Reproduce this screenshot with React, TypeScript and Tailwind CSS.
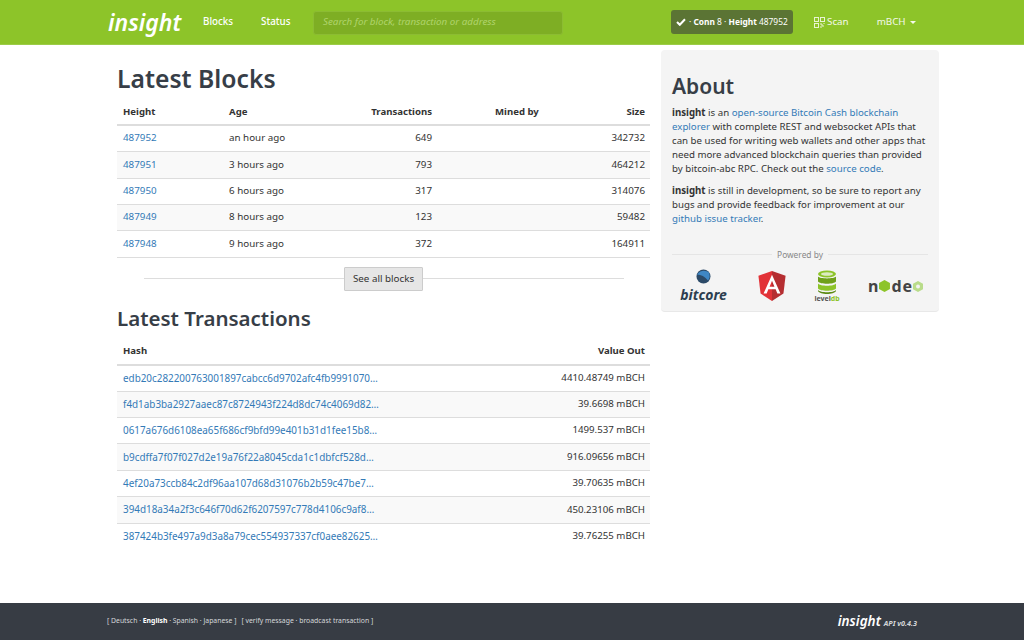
const blocks = [
  ['487952', 'an hour ago', '649', '342732'],
  ['487951', '3 hours ago', '793', '464212'],
  ['487950', '6 hours ago', '317', '314076'],
  ['487949', '8 hours ago', '123', '59482'],
  ['487948', '9 hours ago', '372', '164911'],
]

const txs = [
  ['edb20c282200763001897cabcc6d9702afc4fb9991070…', '4410.48749 mBCH'],
  ['f4d1ab3ba2927aaec87c8724943f224d8dc74c4069d82…', '39.6698 mBCH'],
  ['0617a676d6108ea65f686cf9bfd99e401b31d1fee15b8…', '1499.537 mBCH'],
  ['b9cdffa7f07f027d2e19a76f22a8045cda1c1dbfcf528d…', '916.09656 mBCH'],
  ['4ef20a73ccb84c2df96aa107d68d31076b2b59c47be7…', '39.70635 mBCH'],
  ['394d18a34a2f3c646f70d62f6207597c778d4106c9af8…', '450.23106 mBCH'],
  ['387424b3fe497a9d3a8a79cec554937337cf0aee82625…', '39.76255 mBCH'],
]

function QrIcon() {
  return (
    <svg width="11" height="11" viewBox="0 0 11 11" fill="none" stroke="#e8f3d2" strokeWidth="1">
      <rect x="0.5" y="0.5" width="4" height="4" />
      <rect x="6.5" y="0.5" width="4" height="4" />
      <rect x="0.5" y="6.5" width="4" height="4" />
      <path d="M6 7h2v2h2M6 10h2M10 6v1" />
    </svg>
  )
}

function CheckIcon() {
  return (
    <svg width="10" height="8" viewBox="0 0 10 8" fill="none" stroke="#fff" strokeWidth="2">
      <path d="M1 4l2.800 2.800L9 1.200" />
    </svg>
  )
}

function AngularLogo() {
  return (
    <svg width="28" height="30" viewBox="0 0 29 32">
      <path d="M14.500 0L0 5l2.300 19L14.500 32z" fill="#e23237" />
      <path d="M14.500 0L29 5l-2.300 19L14.500 32z" fill="#b52e31" />
      <path d="M14.500 4L5.500 24h3.300l1.800-4.500h7.800l1.800 4.500h3.300zm0 6.500l2.600 6.300h-5.200z" fill="#fff" />
    </svg>
  )
}

function LevelDbLogo() {
  return (
    <svg width="20" height="25" viewBox="0 0 20 25">
      <ellipse cx="10" cy="4" rx="9" ry="3.500" fill="#8dc429" />
      <ellipse cx="10" cy="4" rx="6" ry="1.800" fill="#dcebc0" />
      <path d="M1 6.500c2 2.500 16 2.500 18 0v5c-2 3-16 3-18 0z" fill="#6fa01a" />
      <path d="M1 13.500c2 3 16 3 18 0v5c-2 3-16 3-18 0z" fill="#8dc429" />
      <path d="M1 20c2 3 16 3 18 0v1c-2 4-16 4-18 0z" fill="#5c8a14" />
    </svg>
  )
}

function NodeLogo() {
  return (
    <div className="flex items-center gap-[1px] text-[#444] font-bold text-[16px] leading-none">
      <span>n</span>
      <svg width="11" height="12" viewBox="0 0 10 11">
        <path d="M5 0l5 2.750v5.500L5 11 0 8.250v-5.500z" fill="#8dc429" />
      </svg>
      <span>d</span>
      <span>e</span>
      <svg width="10" height="11" viewBox="0 0 10 11">
        <path d="M5 0l5 2.750v5.500L5 11 0 8.250v-5.500z" fill="#b9dc8a" />
        <circle cx="5" cy="5.500" r="2" fill="#f3f3f3" />
      </svg>
    </div>
  )
}

export default function App() {
  return (
    <div className="min-h-[640px] flex flex-col bg-white text-[9.8px] text-[#333] font-['Noto_Sans',sans-serif]">
      <nav className="h-[45px] bg-[#8dc429] border-b border-[#9ccc48] flex items-center pl-[108px]">
        <a className="w-[95px] text-white italic font-semibold text-[23px] leading-none">insight</a>
        <a className="w-[58px] mt-[1px] text-white font-medium">Blocks</a>
        <a className="w-[52px] mt-[1px] text-white font-medium">Status</a>
        <div className="w-[250px] h-[24px] mt-[1px] flex items-center px-[9px] bg-[#7eae24] border border-[#8cbc33] rounded-[3px] italic text-[#b0d46c]">
          Search for block, transaction or address
        </div>
        <div className="ml-[108px] w-[122px] h-[24px] flex items-center pl-[5px] gap-[3px] bg-[#5b7434] rounded-[3px] text-white text-[8.4px] whitespace-nowrap">
          <CheckIcon />
          <span>· <b>Conn</b> 8 · <b>Height</b> 487952</span>
        </div>
        <a className="ml-[21px] mt-[1px] flex items-center gap-[2px] text-[#f4f9ea]">
          <QrIcon />
          Scan
        </a>
        <a className="ml-[28px] mt-[1px] flex items-center gap-1 text-[#f4f9ea]">
          mBCH
          <span className="w-0 h-0 border-x-[3px] border-x-transparent border-t-[3px] border-t-[#f4f9ea]" />
        </a>
      </nav>

      <main className="flex-1 flex items-start pl-[117px]">
        <div className="w-[533px] flex flex-col">
          <h1 className="mt-[17px] text-[24.7px] leading-[33px] font-semibold text-[#373e47]">Latest Blocks</h1>
          <table className="mt-[5.4px] w-full table-fixed border-collapse">
            <colgroup>
              <col className="w-[106px]" />
              <col className="w-[107px]" />
              <col className="w-[108px]" />
              <col className="w-[106px]" />
              <col className="w-[106px]" />
            </colgroup>
            <thead>
              <tr className="h-[25px] border-b-2 border-[#ddd] font-bold text-[9.6px]">
                <th className="px-[6px] text-left">Height</th>
                <th className="px-[6px] text-left">Age</th>
                <th className="px-[6px] text-right">Transactions</th>
                <th className="pl-[57px] text-left whitespace-nowrap">Mined by</th>
                <th className="pr-[5px] text-right">Size</th>
              </tr>
            </thead>
            <tbody>
              {blocks.map((b, i) => (
                <tr key={b[0]} className={`h-[26.4px] border-b border-[#ddd] ${i % 2 === 1 ? 'bg-[#f9f9f9]' : ''}`}>
                  <td className="px-[6px] text-[#337ab7]">{b[0]}</td>
                  <td className="px-[6px]">{b[1]}</td>
                  <td className="px-[6px] text-right">{b[2]}</td>
                  <td />
                  <td className="pr-[5px] text-right">{b[3]}</td>
                </tr>
              ))}
            </tbody>
          </table>

          {/* divider with the button sitting on it */}
          <div className="relative mt-[7px] h-[30px] flex items-center justify-center">
            <div className="absolute left-[27px] right-[26px] top-[13px] border-t border-[#ddd]" />
            <button className="relative w-[79px] h-[24px] mt-[-1px] bg-[#e6e6e6] border border-[#ccc] rounded-[1px]">See all blocks</button>
          </div>

          <h2 className="mt-[9px] text-[20.5px] leading-[28px] font-semibold text-[#373e47]">Latest Transactions</h2>
          <table className="mt-[6.9px] w-full border-collapse">
            <thead>
              <tr className="h-[26px] border-b-2 border-[#ddd] font-bold text-[9.6px]">
                <th className="px-[6px] text-left">Hash</th>
                <th className="pr-[5px] text-right">Value Out</th>
              </tr>
            </thead>
            <tbody>
              {txs.map((t, i) => (
                <tr key={t[0]} className={`h-[26.4px] ${i < 6 ? 'border-b border-[#ddd]' : ''} ${i % 2 === 1 ? 'bg-[#f9f9f9]' : ''}`}>
                  <td className="px-[6px] text-[#337ab7] text-[9.9px]">{t[0]}</td>
                  <td className="pr-[5px] text-right text-[9.7px]">{t[1]}</td>
                </tr>
              ))}
            </tbody>
          </table>
        </div>

        <aside className="ml-[11px] mt-[5px] w-[278px] h-[262px] bg-[#f4f4f4] rounded-[4px] border-b border-[#e8e8e8] px-[11px]">
          <h2 className="mt-[22px] text-[21px] leading-[28px] font-semibold text-[#373e47]">About</h2>
          <p className="mt-[5.5px] leading-[14.2px] text-[9.7px] whitespace-nowrap">
            <b>insight</b> is an <a className="text-[#337ab7]">open-source Bitcoin Cash blockchain<br />explorer</a> with complete REST and websocket APIs that<br />can be used for writing web wallets and other apps that<br />need more advanced blockchain queries than provided<br />by bitcoin-abc RPC. Check out the <a className="text-[#337ab7]">source code</a>.
          </p>
          <p className="mt-[7px] leading-[14.2px] text-[9.7px] whitespace-nowrap">
            <b>insight</b> is still in development, so be sure to report any<br />bugs and provide feedback for improvement at our<br /><a className="text-[#337ab7]">github issue tracker</a>.
          </p>
          <div className="mt-[22.5px] flex items-center gap-[5px] text-[8.4px] text-[#888]">
            <div className="flex-1 border-t border-[#e5e5e5]" />
            Powered by
            <div className="flex-1 border-t border-[#e5e5e5]" />
          </div>
          <div className="mt-[8px] pl-[8px] flex items-center gap-[31px]">
            <div className="flex flex-col items-center w-[47px]">
              <svg width="15" height="15" viewBox="0 0 15 14">
                <circle cx="7.500" cy="7" r="7" fill="#2c4a68" />
                <path d="M1 5c4 0 8 2 11 6 2-2 2-5 1-8C10 1 5 0 1 5z" fill="#3f87c5" />
              </svg>
              <span className="mt-[3px] text-[#2c3e50] italic font-bold text-[14px] leading-[16px]">bitcore</span>
            </div>
            <AngularLogo />
            <div className="flex flex-col items-center w-[20px]">
              <LevelDbLogo />
              <span className="text-[7px] font-bold leading-[8px] text-[#555]">level<span className="text-[#8dc429]">db</span></span>
            </div>
            <NodeLogo />
          </div>
        </aside>
      </main>

      <footer className="h-[37px] bg-[#373c44] flex items-center justify-between pl-[107px] pr-[107px] text-[6.85px] text-[#d5d7da]">
        <div>
          <span>[ Deutsch · <b className="text-white">English</b> · Spanish · Japanese ]</span>
          <span className="ml-[5px]">[ verify message · broadcast transaction ]</span>
        </div>
        <div className="flex items-baseline gap-[3px]">
          <span className="text-white italic font-semibold text-[13.5px]">insight</span>
          <span className="italic font-bold text-[7.2px]">API v0.4.3</span>
        </div>
      </footer>
    </div>
  )
}
